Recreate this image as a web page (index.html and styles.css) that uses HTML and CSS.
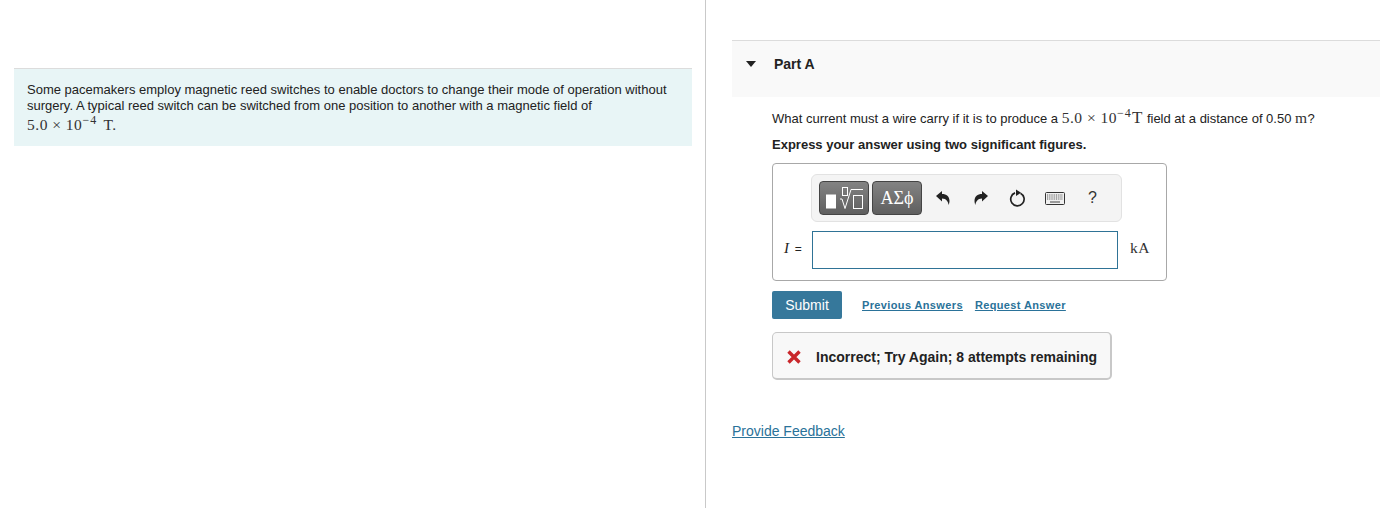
FILE: index.html
```html
<!DOCTYPE html>
<html lang="en">
<head>
    <meta charset="UTF-8">
    <title>Part A</title>
    <link rel="stylesheet" href="styles.css">
</head>
<body>
    <div class="page">
        <div class="left-pane">
            <div class="intro">
                <div>Some pacemakers employ magnetic reed switches to enable doctors to change their mode of operation without surgery. A typical reed switch can be switched from one position to another with a magnetic field of</div>
                <div class="math intro-math">5.0 × 10<sup>−4</sup> <span class="unit-t">T.</span></div>
            </div>
        </div>
        <div class="right-pane">
            <div class="part-header">
                <svg class="caret" width="10" height="6" viewBox="0 0 10 6"><path d="M0 0h10L5 6z" fill="#222"/></svg>
                <span class="part-title">Part A</span>
            </div>
            <div class="part-body">
                <p class="question">What current must a wire carry if it is to produce a <span class="math">5.0 × 10<sup>−4</sup><span class="big-t">T</span></span> field at a distance of 0.50 <span class="math">m</span>?</p>
                <p class="instruction">Express your answer using two significant figures.</p>
                <div class="answer-box">
                    <div class="toolbar">
                        <button class="tool-btn templates">
                            <svg width="46" height="28" viewBox="0 0 46 28">
                                <rect x="5" y="10.500" width="10" height="14" fill="#fff"/>
                                <rect x="21.500" y="3.500" width="5" height="8" fill="none" stroke="#fff"/>
                                <path d="M19 15l2 0 3 9.500 6-19h12" fill="none" stroke="#fff"/>
                                <rect x="32.500" y="11.500" width="9" height="13" fill="none" stroke="#fff"/>
                            </svg>
                        </button>
                        <button class="tool-btn symbols">ΑΣϕ</button>
                        <div class="tool-icons">
                            <span class="tool-slot">
                                <svg width="16" height="16" viewBox="0 0 16 16"><path d="M1 6L7 1V4C11.500 4 14.500 6.500 14.500 11C14.500 12.500 14 14 13.500 15C13.500 12 11.500 8.500 7 8.500V11.500z" fill="#222"/></svg>
                            </span>
                            <span class="tool-slot redo">
                                <svg width="16" height="16" viewBox="0 0 16 16"><path d="M15 6L9 1V4C4.500 4 1.500 6.500 1.500 11C1.500 12.500 2 14 2.500 15C2.500 12 4.500 8.500 9 8.500V11.500z" fill="#222"/></svg>
                            </span>
                            <span class="tool-slot">
                                <svg width="18" height="18" viewBox="0 0 18 18"><path d="M11.500 4.200A6.700 6.700 0 1 1 6 3.900" fill="none" stroke="#222" stroke-width="1.700"/><path d="M7 0.500L12 3.800L7 7z" fill="#222"/></svg>
                            </span>
                            <span class="tool-slot">
                                <svg width="20" height="13" viewBox="0 0 20 13"><rect x=".5" y=".5" width="19" height="12" rx="1" fill="#f0f0f0" stroke="#333"/><path d="M2 3h16M2 5h16M2 7h16" stroke="#333" stroke-width=".8" stroke-dasharray="1 .8"/><path d="M5 10h10" stroke="#444"/></svg>
                            </span>
                            <span class="tool-slot help">?</span>
                        </div>
                    </div>
                    <div class="answer-row">
                        <span class="answer-label"><i>I</i> <small>=</small></span>
                        <input class="answer-input" type="text">
                        <span class="unit">kA</span>
                    </div>
                </div>
                <div class="actions">
                    <button class="submit">Submit</button>
                    <a class="small-link" href="#">Previous Answers</a>
                    <a class="small-link" href="#">Request Answer</a>
                </div>
                <div class="feedback">
                    <svg width="16" height="14" viewBox="0 0 16 14"><path d="M2.500 1.500L13.500 12.500M13.500 1.500L2.500 12.500" stroke="#c9272b" stroke-width="3.400"/></svg>
                    <span>Incorrect; Try Again; 8 attempts remaining</span>
                </div>
            </div>
            <a class="provide" href="#">Provide Feedback</a>
        </div>
    </div>
</body>
</html>
```
FILE: styles.css
```css
html, body {
    margin: 0;
    padding: 0;
    height: 100%;
    overflow: hidden;
}
body {
    background: #fff;
    color: #222;
    font-family: "Liberation Sans", Arial, sans-serif;
    font-size: 13px;
    line-height: 16px;
}
.page {
    display: flex;
    height: 508px;
}
.math {
    font-family: "Liberation Serif", serif;
    font-size: 15.5px;
    letter-spacing: .5px;
    color: #333;
}
.math sup {
    font-size: 12px;
    line-height: 0;
    letter-spacing: 1px;
}
.big-t {
    font-size: 17px;
    letter-spacing: 1px;
}
.left-pane {
    width: 706px;
    box-sizing: border-box;
    border-right: 1px solid #c9c9c9;
    padding: 68px 13px 0 14px;
}
.intro {
    background: #e8f5f6;
    border-top: 1px solid #dcdcdc;
    padding: 13px 13px 12px;
    height: 78px;
    box-sizing: border-box;
}
.intro-math {
    line-height: 22px;
}
.unit-t {
    margin-left: 2px;
}
.right-pane {
    flex: 1;
    padding: 40px 0 0 26px;
}
.part-header {
    display: flex;
    align-items: flex-start;
    height: 57px;
    box-sizing: border-box;
    background: #f9f9f9;
    border-top: 1px solid #dcdcdc;
    padding: 15px 0 0 14px;
}
.caret {
    margin-top: 5px;
}
.part-title {
    margin-left: 18px;
    font-size: 14px;
    font-weight: bold;
}
.part-body {
    padding-left: 40px;
}
.question {
    margin: 11px 0 0;
    height: 20px;
    line-height: 20px;
}
.instruction {
    margin: 9px 0 0;
    font-weight: bold;
}
.answer-box {
    width: 395px;
    height: 118px;
    box-sizing: border-box;
    margin-top: 10px;
    border: 1px solid #a8a8a8;
    border-radius: 4px;
    padding: 10px 0 0 38px;
}
.toolbar {
    display: flex;
    align-items: center;
    width: 311px;
    height: 48px;
    box-sizing: border-box;
    background: #f4f4f4;
    border: 1px solid #e2e2e2;
    border-radius: 6px;
    padding-left: 7px;
}
.tool-btn {
    height: 34px;
    box-sizing: border-box;
    margin: 0 3px 0 0;
    padding: 0;
    border: 1px solid #444;
    border-radius: 4px;
    background: linear-gradient(#838383, #5f5f5f);
    color: #fff;
    font-family: "Liberation Serif", serif;
    font-size: 18px;
}
.templates {
    width: 50px;
    display: flex;
    align-items: center;
    justify-content: center;
}
.symbols {
    width: 50px;
}
.tool-icons {
    display: flex;
    align-items: center;
    margin-left: -1px;
}
.tool-slot {
    display: flex;
    justify-content: center;
    width: 37px;
}
.redo {
    margin-left: 1px;
}
.help {
    font-size: 16px;
    color: #333;
    padding-left: 1px;
}
.answer-row {
    display: flex;
    align-items: center;
    margin: 9px 0 0 -27px;
}
.answer-label {
    width: 28px;
    padding-bottom: 4px;
    font-family: "Liberation Serif", serif;
    font-size: 15px;
}
.answer-label small {
    margin-left: 2px;
    font-family: "Liberation Sans", sans-serif;
    font-size: 12px;
}
.answer-input {
    width: 306px;
    height: 38px;
    box-sizing: border-box;
    border: 1px solid #2f7396;
    outline: none;
    padding: 0;
}
.unit {
    margin-left: 12px;
    padding-bottom: 4px;
    font-family: "Liberation Serif", serif;
    font-size: 15.5px;
    letter-spacing: .5px;
    color: #333;
}
.actions {
    display: flex;
    align-items: center;
    margin-top: 10px;
}
.submit {
    width: 70px;
    height: 28px;
    padding: 0;
    border: none;
    border-radius: 2px;
    background: #36789b;
    color: #fff;
    font-family: "Liberation Sans", Arial, sans-serif;
    font-size: 14px;
    margin-right: 20px;
}
.small-link {
    margin-right: 12px;
    color: #2a7299;
    font-size: 11px;
    font-weight: bold;
    letter-spacing: .37px;
}
.feedback {
    display: inline-flex;
    align-items: center;
    gap: 14px;
    height: 48px;
    box-sizing: border-box;
    margin-top: 13px;
    padding: 2px 13px 0 13px;
    background: #f8f8f8;
    border: 1px solid #c8c8c8;
    border-bottom-width: 2px;
    border-right-width: 2px;
    border-radius: 5px;
    font-size: 14px;
    font-weight: bold;
    white-space: nowrap;
}
.provide {
    display: block;
    width: max-content;
    margin-top: 43px;
    color: #2a7299;
    font-size: 14px;
}
```
